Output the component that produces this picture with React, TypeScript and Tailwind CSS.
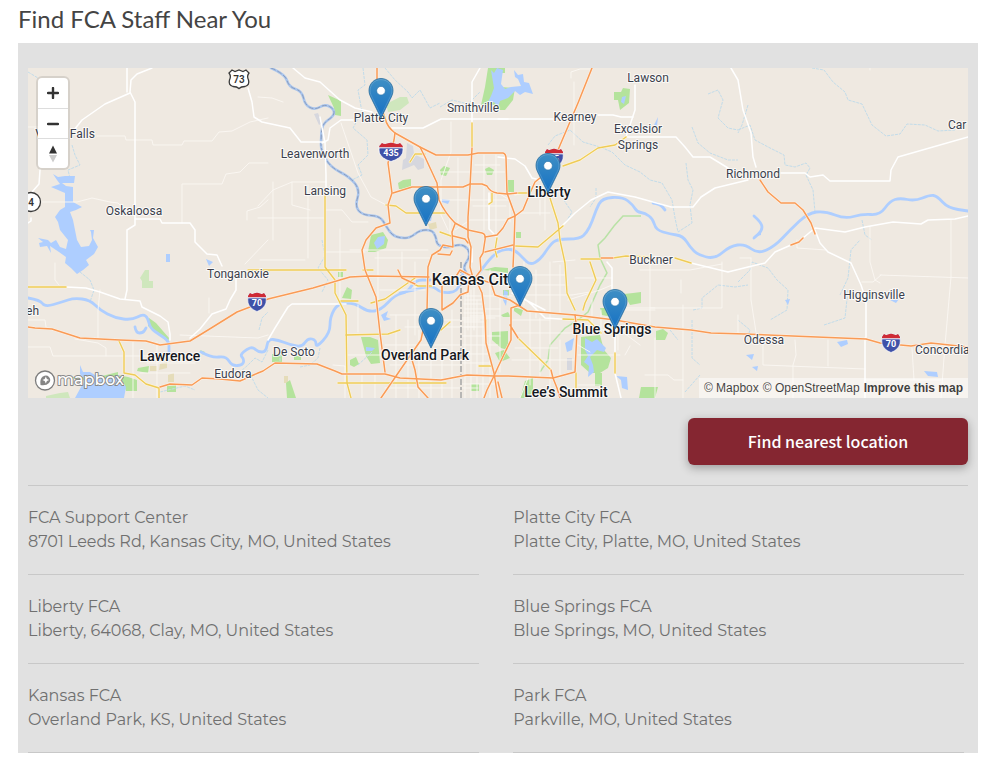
import { useId } from "react";

const locations = [
  {
    name: "FCA Support Center",
    address: "8701 Leeds Rd, Kansas City, MO, United States",
  },
  { name: "Platte City FCA", address: "Platte City, Platte, MO, United States" },
  {
    name: "Liberty FCA",
    address: "Liberty, 64068, Clay, MO, United States",
  },
  { name: "Blue Springs FCA", address: "Blue Springs, MO, United States" },
  { name: "Kansas FCA", address: "Overland Park, KS, United States" },
  { name: "Park FCA", address: "Parkville, MO, United States" },
];

// x, y of the tip of each marker
const pins = [
  [381, 119],
  [548, 194],
  [426, 227],
  [520, 307],
  [615, 330],
  [431, 349],
];

const towns: [string, number, number][] = [
  ["Lawson", 648, 82],
  ["Smithville", 473, 112],
  ["Kearney", 575, 121],
  ["Platte City", 381, 122],
  ["Excelsior", 638, 133],
  ["Springs", 638, 149],
  ["Valley Falls", 65, 138],
  ["Leavenworth", 315, 158],
  ["Lansing", 325, 195],
  ["Richmond", 753, 178],
  ["Oskaloosa", 134, 215],
  ["Tonganoxie", 238, 278],
  ["Buckner", 651, 264],
  ["Higginsville", 874, 299],
  ["Odessa", 764, 344],
  ["De Soto", 294, 356],
  ["Eudora", 233, 378],
];

const cities: [string, number, number, number][] = [
  ["Liberty", 549, 197, 14],
  ["Kansas City", 474, 285, 16],
  ["Blue Springs", 612, 334, 14],
  ["Overland Park", 425, 360, 14],
  ["Lawrence", 170, 361, 14],
  ["Lee’s Summit", 566, 397, 14],
];

const whiteRoads = [
  "M127 68V92M152 68L137 74L131 80L130 92L135 102V225L127 230V290L125 299",
  "M130 93L105 104L82 120L74 130M40 170L39 184L32 192M31 218V221L28 223",
  "M248 88L252 102L254 117L262 122L290 128L301 142H325",
  "M135 219H160L162 223H190L195 230V242L207 254L217 255L222 266M236 276V290L230 300L226 309L212 314L200 329L190 338",
  "M66 287L86 288L100 292L120 299L140 301L142 307L160 316L168 322L170 334V340",
  "M293 68L305 78L320 82L340 100L355 108L372 112",
  "M480 68L472 82V123",
  "M508 119H441L423 128H391M353 120H341L330 128L328 140L322 143",
  "M320 117L325 143L326 175V193M498 119H553M598 115H613L621 117H633",
  "M635 85V110L626 137H676L685 147L693 157H710L728 168",
  "M731 68L738 80L743 110L751 133L753 157L756 167",
  "M781 173H805L810 177L823 175L830 181H890L891 170L898 157L968 137",
  "M748 180L715 188L701 197L693 207H671L635 197L608 192L591 200L575 213L560 228",
  "M968 216L955 219L928 220L921 224L893 222L865 227L845 232L815 228L803 238",
  "M815 230L820 243L828 252L851 263L861 285L866 300V338M865 338V398",
  "M691 263L728 272L748 267L765 263L775 252L791 245",
  "M268 340L275 328L288 307L292 304H346",
  "M607 262L612 268V305M615 333V353M615 373L621 398",
  "M498 157L515 159L525 166L532 178L540 180",
  "M520 295L532 305L545 318L575 320M512 293L545 310",
  "M489 193V229L497 237M472 249L472 262",
];

const thinRoads = [
  "M97 136H125L126 140H152L153 145H182L184 141H212L219 132L232 131L250 122L268 118",
  "M268 163H249L240 172L226 174L222 184H182V223M247 220V211L260 207L268 200",
  "M40 202H57L77 202L92 198L110 202L118 203L122 207M28 127H38",
  "M55 263V280L59 285M100 290L98 310V338M28 320H45L46 327M28 347H50L53 356H190",
  "M75 339L98 343L106 348V356M133 342V398M157 342V398M147 363H195M140 373H190M180 335L258 338L268 335M209 298V313M245 264L268 240",
  "M258 97L272 98L283 102M341 123L358 173L371 197L390 207M258 206L273 190L292 182H326M273 182V240",
  "M292 182V205L310 210M308 185V258M260 260H305M258 218H325M326 210L342 210L352 222H368M326 252H365M340 229V305M378 252V300",
  "M451 122V152L441 180V215L448 230M484 155V230M496 155V235M440 172H505M440 200H508M450 215V235M475 165H500M458 158V225M473 206H506M455 230L470 220H510",
  "M350 250H428M375 258H430M380 290H425M402 252V275M415 262V335M390 315H440M347 355H395M396 315V398M408 320V398M419 330V398M431 350V398M442 350V398M452 310V398M385 345H460M390 365H462M385 388H478M405 327H475M440 320H480M333 365L345 366V398M362 374V398M375 374V398M358 305V332",
  "M465 290V398M471 290V398M477 300V398M483 312V398M465 300H482M465 309H500M462 318H495M465 327H487M462 336H500M462 345H498M465 354H488M462 363H490M462 384H494M470 240V270M490 270V398M500 298V372M470 316H500M466 296H512M468 290V330M474 288V330M464 304H484M464 313H484M464 322H484",
  "M524 262V305M536 270V318M550 262V398M560 265V312M530 275H566M526 285H568M525 295H572M512 320H550M512 333H575M530 310V385M515 348H558M540 318V378M512 360H575M520 398L528 378M560 340V378M568 300L600 290L612 285M553 262L575 260",
  "M575 278H612M572 295L590 292M580 330H650M592 300V330M601 310V335M620 330L640 345M578 355H620M578 385H600M578 345L590 352M612 310H655M618 335V350M630 346L625 355",
  "M650 258V308H722V262M722 264L690 270H640M681 280V293M683 305V398M612 308H655M650 308V325M645 375H668L674 380H683M655 338V398",
  "M571 78V72L580 69H590M574 82V145M553 119L574 117M498 193L510 200V222M515 195L530 192M540 200V215M520 213H550M545 190V230",
  "M751 258V300L756 332M738 315V334M751 258L740 258M797 240V248L826 250M870 227V262L875 280L880 283M951 220V277M880 275L968 278M951 277L945 345L941 398M862 282H873L881 275M795 340L796 355L793 365V398M763 338V365L865 369M828 340V366M912 348L914 380M941 380H865M870 70V68",
];

const orangeRoads = [
  "M28 327L35 328L52 329L80 338L120 340L146 341L160 345L190 341L208 330L237 312L250 307L268 299L313 288L350 277L370 276L429 277",
  "M160 387L170 384L192 385L202 378L220 379L240 381L258 373L263 371L275 363L317 364L335 371L342 374H385L400 378L441 380L467 375L494 376L508 376L553 378L575 372L577 330L575 315",
  "M377 68V95L385 118Q387 127 395 133L420 147L436 155H468L478 153L503 153Q506 154 506 158L507 193L515 215L514 245L513 267",
  "M420 147L425 157L437 183L439 200Q445 213 455 223L468 230L482 233Q486 234 485 240L483 253L480 258L481 270L475 278",
  "M395 133L394 140L388 163L392 193L388 205L390 223L376 228L366 240L362 250L365 270L376 297L380 333L385 372",
  "M393 193L412 187H463L470 184H482L487 186Q490 192 497 193L507 194L517 193",
  "M472 148L470 187L468 217V237L471 247L470 267L473 278",
  "M592 68L578 103L558 150M540 178L535 182L530 193L523 210L515 216L508 219L503 228L497 235L485 237",
  "M455 224L452 232L453 247L443 245L440 250L432 255L428 267L427 310L421 340L405 363L381 398",
  "M438 254L450 255L452 251M453 236L465 239L468 243M485 252L513 245",
  "M442 283V310L453 303L460 295L468 292L469 278M455 278L460 270L475 278",
  "M398 270L402 278L415 284",
  "M475 278L482 293L485 317L486 343L494 373L498 398",
  "M475 278L491 283L495 295L510 300L527 311L575 315L615 320L655 327L691 330L711 333L745 334L866 339L880 343L911 346L931 343L968 347",
  "M520 305L511 308V340L498 367L494 376L487 390L484 398M553 378L557 388L560 398M510 325L518 338M551 370L553 378M498 382L502 398",
  "M410 353L415 370L418 387L428 398M601 258H613",
  "M760 180L768 192L781 203H795L803 210L811 223L815 234M791 245L799 242L803 238",
];

const yellowRoads = [
  "M28 287H66M119 341L124 352V373L135 375L146 384L159 388V398",
  "M325 196V267L335 280V293L346 315L347 383L351 398",
  "M248 270H346M363 270H373M338 383H446M346 335L388 334L400 330",
  "M371 303L385 299L405 285L415 278M341 301H358M405 280L418 286H432",
  "M386 205L396 206L406 213H446M440 232L451 236M410 162L415 154H425M472 123V148",
  "M563 166L580 160L598 148L615 145L626 137M517 193H530M492 193V202L489 204",
  "M550 198L558 223L560 240L565 263L567 293L575 310M563 226L538 247L515 246M497 238L495 250L497 257",
  "M581 259H601M613 258L626 256L648 257M675 258L691 263M590 262L596 280L585 303L583 310",
  "M615 353V373M576 373V390M563 319L588 320L601 333M551 370L518 338M486 320V343M479 366H492M441 330L450 322",
];

const creeks = [
  "M28 72L38 78M72 145L75 155L80 165L68 170L70 178M80 272L90 280L94 290L90 302",
  "M363 68L365 85L358 90L362 112L353 128L367 140L368 155L358 165L362 175L352 180M385 68L395 80L408 92L412 98L420 90L430 108L440 103M440 107L452 100L468 104L480 92",
  "M548 145L555 136L570 130L583 142L600 147L612 152L625 165L640 172L650 180L662 183L672 200L675 218L678 232L692 223L690 205L693 190L688 180L686 163",
  "M692 127L698 143L710 153L728 160L738 160M708 94L718 90L723 100L718 118L728 128L738 130M748 105L742 125L738 133",
  "M812 68L824 70L833 82L845 92L848 100L862 104L872 125L886 136L900 134L907 124L925 125L938 131L955 130",
  "M738 130L750 125L755 140L770 148L784 155L785 165L795 167L806 163L810 168L806 175L813 190L815 212M862 220L865 235L872 240M840 295L848 278L851 250L860 240",
  "M268 350L262 362L255 358L248 365L240 372L252 378L258 390L268 398M320 348L318 358L310 365L300 367M259 330L262 318L268 312",
  "M693 310L702 308V298L712 290L718 285L735 287L748 285M692 320V358L700 365M738 282L750 270L752 262L768 268L777 280L788 290L787 310L770 320M738 320L750 330L745 345M824 325L845 318L848 290",
  "M566 222L572 212L565 202L560 190M596 188V198L590 207M670 330L678 340M700 375L685 392M160 392L185 386L195 390",
  "M322 240L325 256L318 268L328 280L322 292M280 350V362M358 365L372 352",
];

const parks = [
  "M328 95L341 101V116L335 115L334 108Z",
  "M398 183L403 180L411 179V189H399Z",
  "M440 170L444 166L450 168L446 176L441 175Z",
  "M485 169L489 167L494 170L492 175L487 175Z",
  "M371 235L383 232L388 240L386 248L375 252H368Z",
  "M488 68H505V73H501V87L515 88L513 100L505 110H498L494 105H481L485 87Z",
  "M361 337H370L378 340L380 363L371 364L366 356Z",
  "M350 360L356 357L359 364L354 367L350 365Z",
  "M342 298L347 287L352 290L351 299Z",
  "M338 272H343V277H338Z",
  "M286 383L290 380L296 398H287Z",
  "M492 332L508 331V350L501 348L492 340Z",
  "M495 353L504 350L510 358L500 362Z",
  "M471 384H479V391H471Z",
  "M483 270L495 267L508 268V273L495 271Z",
  "M503 290H509V296H503ZM501 315L508 312L511 317L503 317Z",
  "M514 307L523 310L521 316L514 311Z",
  "M624 294L633 293L641 292V303L630 305Z",
  "M600 308H612V317L602 315Z",
  "M656 331L663 329L668 333L665 340H656Z",
  "M581 337L600 335L604 350L611 358L608 368L600 373H590L581 365Z",
  "M595 373H602V386H595Z",
  "M641 387H658L655 398H639Z",
  "M525 381L533 378V392L527 398H520Z",
  "M614 92H621L623 88L630 89L629 103L620 110L618 100H614Z",
  "M508 180H514V192H508Z",
  "M516 232H521V238H516Z",
  "M149 318L156 323L169 338L168 342L152 329L148 326Z",
  "M138 368L149 366L148 373L137 371Z",
  "M118 375L128 377L137 380V391H126L124 384Z",
  "M167 386L176 385V392H167Z",
  "M200 350L205 352L203 355Z",
  "M70 377H98L118 372V377L101 381L78 380Z",
  "M272 354H282V362H272ZM294 356H301V360H294Z",
];

const lakes = [
  "M53 174L58 177L65 176H75L74 183L62 183L66 186L73 187V202L82 207L76 210L70 212L73 220L77 240L81 247L89 246L92 240L91 232L90 230H94L93 238L98 247L94 254L86 260L89 265L83 270L77 274L71 268L65 263L66 257L59 252L50 246L51 253L47 246L40 247L39 243L43 242L38 238L48 240L51 243L56 240L60 247L66 249L68 240L60 230L58 222L55 217L60 210L65 207V193L51 187L60 184L57 180Z",
  "M80 365L83 372H90L95 375L101 377L110 379L118 375L126 387L124 398H75L81 387L86 380L80 374Z",
  "M491 70L494 73L497 68L503 70L501 84L505 89L511 87L521 86L518 79L515 77L514 70L518 75L523 74L524 82L529 83L533 94L525 92L520 95L515 91L508 98L500 101L498 107L494 102L487 104L491 96L494 88Z",
  "M585 338L592 342L597 339L606 348L604 352L597 350L590 357L593 365L594 372L588 377L589 366L584 362L588 356L585 350Z",
  "M374 243L378 237L385 236L384 244L377 249Z",
  "M621 102L622 97L626 96L624 104Z",
  "M381 315L388 311L386 317L391 319L384 321Z",
  "M654 125L658 117L657 126Z",
  "M565 343L574 338L572 350L567 352Z",
  "M616 376L627 377L628 390L622 388L621 380Z",
  "M837 342L847 340L848 344L841 347Z",
  "M924 371L937 372L938 377L928 376Z",
  "M890 300L899 299L896 303Z",
  "M746 355L754 354L752 360ZM752 367L758 366L757 371ZM785 300L790 299L788 305Z",
  "M206 259L213 262L209 266ZM166 254H170V262H166Z",
  "M442 199L450 200L448 204L442 202ZM366 347L375 348L372 351H366Z",
  "M753 237L761 230V235ZM504 290L508 292L506 306L503 300Z",
  "M428 221L432 216L431 221Z",
];

const rivers = [
  "28 298 40 300 45 307 62 302 74 298 90 300 100 310 115 318 132 320 143 314 148 318 150 328 160 335 169 341 169 352",
  "201 352 212 358 226 356 232 366 243 365 244 359 240 355 247 349 253 347 258 352 266 352 268 339 278 340 291 345 302 347 308 338 316 340 316 348 330 333 330 317 338 303 355 303 368 312 381 310 395 295 408 292 415 280 430 280",
  "400 293 415 290 432 285 441 293 458 292 463 273",
  "480 272 487 262 497 252 506 249 515 250 523 258 530 265 540 260 550 245 557 239 580 239 587 232 592 222 596 210 602 198 623 197 633 205 637 212 645 213 653 219 656 230 670 234 683 236 690 247 698 255 715 259 730 246 745 244 758 254 775 246 790 230 808 213 825 211 845 219 862 214 880 215 890 201 900 198 915 201 930 195 937 196 948 208 968 211",
  "135 327 136 333 143 333 146 328",
  "754 216 762 223 762 231 754 238",
  "653 203 660 204 665 210",
];

const missouri =
  "271 68 285 74 289 87 302 91 305 105 315 110 325 104 334 109 334 116 322 124 321 140 321 150 330 167 350 177 360 190 355 206 362 215 380 216 386 226 392 235 400 238 410 238 420 230 432 230 436 237 437 245 447 248 460 244 468 248 470 257 463 267 467 274";

const greenways =
  "M641 216H623L614 226L605 238L598 245L600 258L607 273L600 285L588 312L578 320L565 328L550 345L548 360L540 372";

// Rounds a list of points into a curve that bends at each of them
function curve(points: string) {
  const n = points.split(" ").map(Number);
  let d = `M${n[0]} ${n[1]}`;
  for (let i = 2; i < n.length - 2; i += 2) {
    const midX = (n[i] + n[i + 2]) / 2;
    const midY = (n[i + 1] + n[i + 3]) / 2;
    d += `Q${n[i]} ${n[i + 1]} ${midX} ${midY}`;
  }
  return `${d}L${n[n.length - 2]} ${n[n.length - 1]}`;
}

function Lines({
  paths,
  color,
  width,
}: {
  paths: string[];
  color: string;
  width: number;
}) {
  return (
    <g
      fill="none"
      stroke={color}
      strokeWidth={width}
      strokeLinecap="round"
      strokeLinejoin="round"
    >
      {paths.map((d) => (
        <path key={d} d={d} />
      ))}
    </g>
  );
}

function Pin({ x, y, fill }: { x: number; y: number; fill: string }) {
  return (
    <g transform={`translate(${x - 12.5} ${y - 41})`}>
      <path
        d="M12.5.5C5.7.5.5 5.9.5 12.5c0 3.5 1.5 6.2 2.9 9L12.5 40l9.1-18.5c1.4-2.8 2.9-5.5 2.9-9C24.5 5.9 19.3.5 12.5.5z"
        fill={fill}
        stroke="#2c6f9f"
        strokeOpacity="0.8"
      />
      <path
        d="M12.5 1.6C6.3 1.6 1.6 6.5 1.6 12.5c0 3.2 1.4 5.8 2.8 8.5l8.1 16.5L20.6 21c1.4-2.7 2.8-5.3 2.8-8.5 0-6-4.7-10.9-10.900-10.900z"
        fill="none"
        stroke="#fff"
        strokeOpacity="0.15"
      />
      <circle cx="12.5" cy="12.7" r="4.3" fill="#fff" stroke="#2f76a8" strokeWidth="0.6" />
    </g>
  );
}

function Interstate({
  x,
  y,
  label,
  wide = false,
}: {
  x: number;
  y: number;
  label: string;
  wide?: boolean;
}) {
  return (
    <g transform={`translate(${x} ${y})`}>
      <g transform={wide ? "scale(1.3 1)" : undefined}>
        <path
          d="M-7-9Q-5-7.5-3-8.5Q0-10 3-8.5Q5-7.5 7-9L9-6Q9.5-2 9 1Q7 7 0 9.5Q-7 7-9 1Q-9.5-2-9-6Z"
          fill="#3f51a8"
          stroke="#fff"
          strokeWidth="0.7"
        />
        <path
          d="M-7-9Q-5-7.5-3-8.5Q0-10 3-8.5Q5-7.5 7-9L9-6V-4.5H-9V-6Z"
          fill="#cf2b35"
        />
        <path d="M-9-4.2H9" stroke="#fff" />
      </g>
      <text y="4" textAnchor="middle" fontSize="9" fontWeight="700" fill="#fff">
        {label}
      </text>
    </g>
  );
}

function MapCanvas() {
  const pinFill = useId();

  return (
    <svg
      viewBox="28 68 940 330"
      preserveAspectRatio="xMidYMid slice"
      className="block h-full w-full font-['Roboto',sans-serif]"
      role="img"
      aria-label="Map of FCA staff locations"
    >
      <defs>
        <linearGradient id={pinFill} x1="0" y1="0" x2="0" y2="1">
          <stop offset="0" stopColor="#3f8fc4" />
          <stop offset="1" stopColor="#1571c4" />
        </linearGradient>
      </defs>
      <rect x="28" y="68" width="940" height="330" fill="#efe9e1" />

      <g fill="#d6d7de">
        <path d="M407 143L413 146L414 154L424 159V168L418 170L414 165L402 170L403 160L406 158Z" />
        <path d="M314 114L318 113L322 123L319 125ZM567 358H572V370H567Z" />
      </g>
      <g fill="#e5dcb9">
        <path d="M150 366H157V371H150ZM160 364L167 362V368L159 370ZM168 375L174 373V382H168ZM428 224L436 222L437 228L430 230ZM284 376H288V383H284Z" />
      </g>
      <g fill="#cfe7bd">
        <path d="M386 104L400 97L407 97L409 103L400 110L388 112ZM145 270H149V281H153V288H142V281L140 278ZM46 396L60 393L68 392L70 398H46Z" />
      </g>
      <g fill="#b4e39c">
        {parks.map((d) => (
          <path key={d} d={d} />
        ))}
      </g>
      <path d={greenways} fill="none" stroke="#b9e2a6" strokeWidth="1.5" />
      <g fill="none" stroke="#c2dcea" strokeWidth="1" strokeDasharray="3 1">
        {creeks.map((d) => (
          <path key={d} d={d} />
        ))}
      </g>
      <g fill="#aeceff">
        {lakes.map((d) => (
          <path key={d} d={d} />
        ))}
      </g>
      <Lines paths={rivers.map(curve)} color="#aeceff" width={2.8} />
      <Lines paths={[curve(missouri)]} color="#aac6ee" width={2.6} />
      <path
        d={curve(missouri)}
        fill="none"
        stroke="#8b9dbd"
        strokeWidth="1"
        strokeDasharray="5 2"
      />

      <Lines paths={thinRoads} color="#faf7f3" width={0.9} />
      <Lines paths={whiteRoads} color="#ffffff" width={1.5} />
      <path
        d="M461 262V398"
        stroke="#a5a5a5"
        strokeWidth="1.5"
        strokeDasharray="6 2 3 2"
      />
      <Lines paths={yellowRoads} color="#fff6dc" width={2.6} />
      <Lines paths={yellowRoads} color="#eecb58" width={1.4} />
      <Lines paths={orangeRoads} color="#fff2e6" width={2.6} />
      <Lines paths={orangeRoads} color="#f99b56" width={1.5} />

      <Interstate x={257} y={302} label="70" />
      <Interstate x={391} y={152} label="435" wide />
      <Interstate x={891} y={343} label="70" />
      <Interstate x={554} y={158} label="35" />
      <g transform="translate(239 79)">
        <path
          d="M-7-9L-4-7.5L0-9L4-7.5L7-9L10-6Q7.5-3 9.500 1Q11 6 6 7.500Q2 7.500 0 9.500Q-2 7.500-6 7.500Q-11 6-9.500 1Q-7.500-3-10-6Z"
          fill="#fff"
          stroke="#3a3a3a"
          strokeWidth="1.3"
        />
        <text y="4" textAnchor="middle" fontSize="10" fontWeight="600" fill="#333">
          73
        </text>
      </g>
      <circle cx="31" cy="202" r="9.5" fill="#fff" stroke="#3a3a3a" strokeWidth="1.3" />
      <text x="31" y="206" textAnchor="middle" fontSize="10" fontWeight="600" fill="#333">
        4
      </text>

      <g
        fontSize="12"
        fill="#3b3f4c"
        stroke="#fff"
        strokeOpacity="0.8"
        strokeWidth="2"
        strokeLinejoin="round"
        paintOrder="stroke"
      >
        {towns.map(([name, x, y]) => (
          <text key={name} x={x} y={y} textAnchor="middle">
            {name}
          </text>
        ))}
        <text x="39" y="315" textAnchor="end">
          eh
        </text>
        <text x="948" y="129">
          Car
        </text>
        <text x="915" y="354">
          Concordia
        </text>
      </g>
      <g
        fontWeight="500"
        fill="#16181d"
        stroke="#fff"
        strokeOpacity="0.8"
        strokeWidth="2"
        strokeLinejoin="round"
        paintOrder="stroke"
      >
        {cities.map(([name, x, y, size]) => (
          <text key={name} x={x} y={y} fontSize={size} textAnchor="middle">
            {name}
          </text>
        ))}
      </g>

      {pins.map(([x, y]) => (
        <Pin key={`${x}-${y}`} x={x} y={y} fill={`url(#${pinFill})`} />
      ))}
    </svg>
  );
}

function MapControls() {
  return (
    <div className="absolute top-2 left-2 flex w-[34px] flex-col overflow-hidden rounded-md border-2 border-black/10 bg-white bg-clip-padding">
      <button
        type="button"
        aria-label="Zoom in"
        className="flex h-[30px] items-center justify-center"
      >
        <svg viewBox="0 0 12 12" className="size-3">
          <path d="M6 1V11M1 6H11" stroke="#333" strokeWidth="2.4" strokeLinecap="round" />
        </svg>
      </button>
      <button
        type="button"
        aria-label="Zoom out"
        className="flex h-[30px] items-center justify-center border-t border-[#ddd]"
      >
        <svg viewBox="0 0 12 12" className="size-3">
          <path d="M1 6H11" stroke="#333" strokeWidth="2.4" strokeLinecap="round" />
        </svg>
      </button>
      <button
        type="button"
        aria-label="Reset bearing to north"
        className="flex h-[30px] items-center justify-center border-t border-[#ddd]"
      >
        <svg viewBox="0 0 10 18" className="h-[18px] w-[10px]">
          <path d="M5 0.5L9 8.5H1Z" fill="#333" />
          <path d="M5 17.5L9 10H1Z" fill="#ccc" />
        </svg>
      </button>
    </div>
  );
}

function MapboxLogo() {
  return (
    <a href="#mapbox" aria-label="Mapbox" className="absolute bottom-1 left-1">
      <svg viewBox="0 0 92 26" className="h-[26px] w-[92px]">
        <circle cx="13" cy="12.5" r="9.5" fill="#fff" stroke="#7d7d7d" strokeWidth="1.3" />
        <path
          d="M8.5 17Q7.5 10.5 11 8.5Q14.5 6.5 17 9Q19.5 12 17 15Q14.5 17.8 8.5 17Z"
          fill="#858585"
        />
        <path
          d="M13.8 8.5L14.9 10.9L17.2 12L14.9 13.1L13.8 15.5L12.7 13.1L10.4 12L12.7 10.9Z"
          fill="#fff"
        />
        <text
          x="25"
          y="17"
          fontSize="16"
          fontWeight="500"
          fill="#fff"
          stroke="#8a8a8a"
          strokeWidth="2"
          strokeLinejoin="round"
          paintOrder="stroke"
          className="font-['Montserrat','Inter',sans-serif]"
        >
          mapbox
        </text>
      </svg>
    </a>
  );
}

export default function App() {
  return (
    <main className="mr-[19px] ml-[18px] pb-4">
      <h1 className="flex h-[43px] items-center pb-1.5 font-['Lato',sans-serif] text-2xl text-[#444]">
        Find FCA Staff Near You
      </h1>
      <section className="bg-[#e1e1e1] px-2.5 pt-[25px]">
        <div className="relative h-[330px] overflow-hidden">
          <MapCanvas />
          <MapControls />
          <MapboxLogo />
          <div className="absolute right-0 bottom-0 flex h-5 items-center gap-1 bg-white/50 px-[5px] font-['Liberation_Sans',sans-serif] text-xs text-black/75">
            <a href="#mapbox">© Mapbox</a>
            <a href="#openstreetmap">© OpenStreetMap</a>
            <a href="#improve" className="font-bold">
              Improve this map
            </a>
          </div>
        </div>
        <div className="flex justify-end border-b border-[#c8c8c8] py-5">
          <button
            type="button"
            className="h-[47px] w-[280px] rounded-md bg-[#852631] pb-0.5 font-['Noto_Sans_CJK_SC',sans-serif] text-base leading-6 font-medium text-white shadow-[0_3px_10px_rgba(0,0,0,0.3)]"
          >
            Find nearest location
          </button>
        </div>
        <ul className="flex flex-wrap gap-x-[34px] font-['Montserrat','Inter',sans-serif] text-base leading-6 text-[#707070]">
          {locations.map((location) => (
            <li
              key={location.name}
              className="w-[48%] border-b border-[#c8c8c8] py-5"
            >
              <p>{location.name}</p>
              <p>{location.address}</p>
            </li>
          ))}
        </ul>
      </section>
    </main>
  );
}
